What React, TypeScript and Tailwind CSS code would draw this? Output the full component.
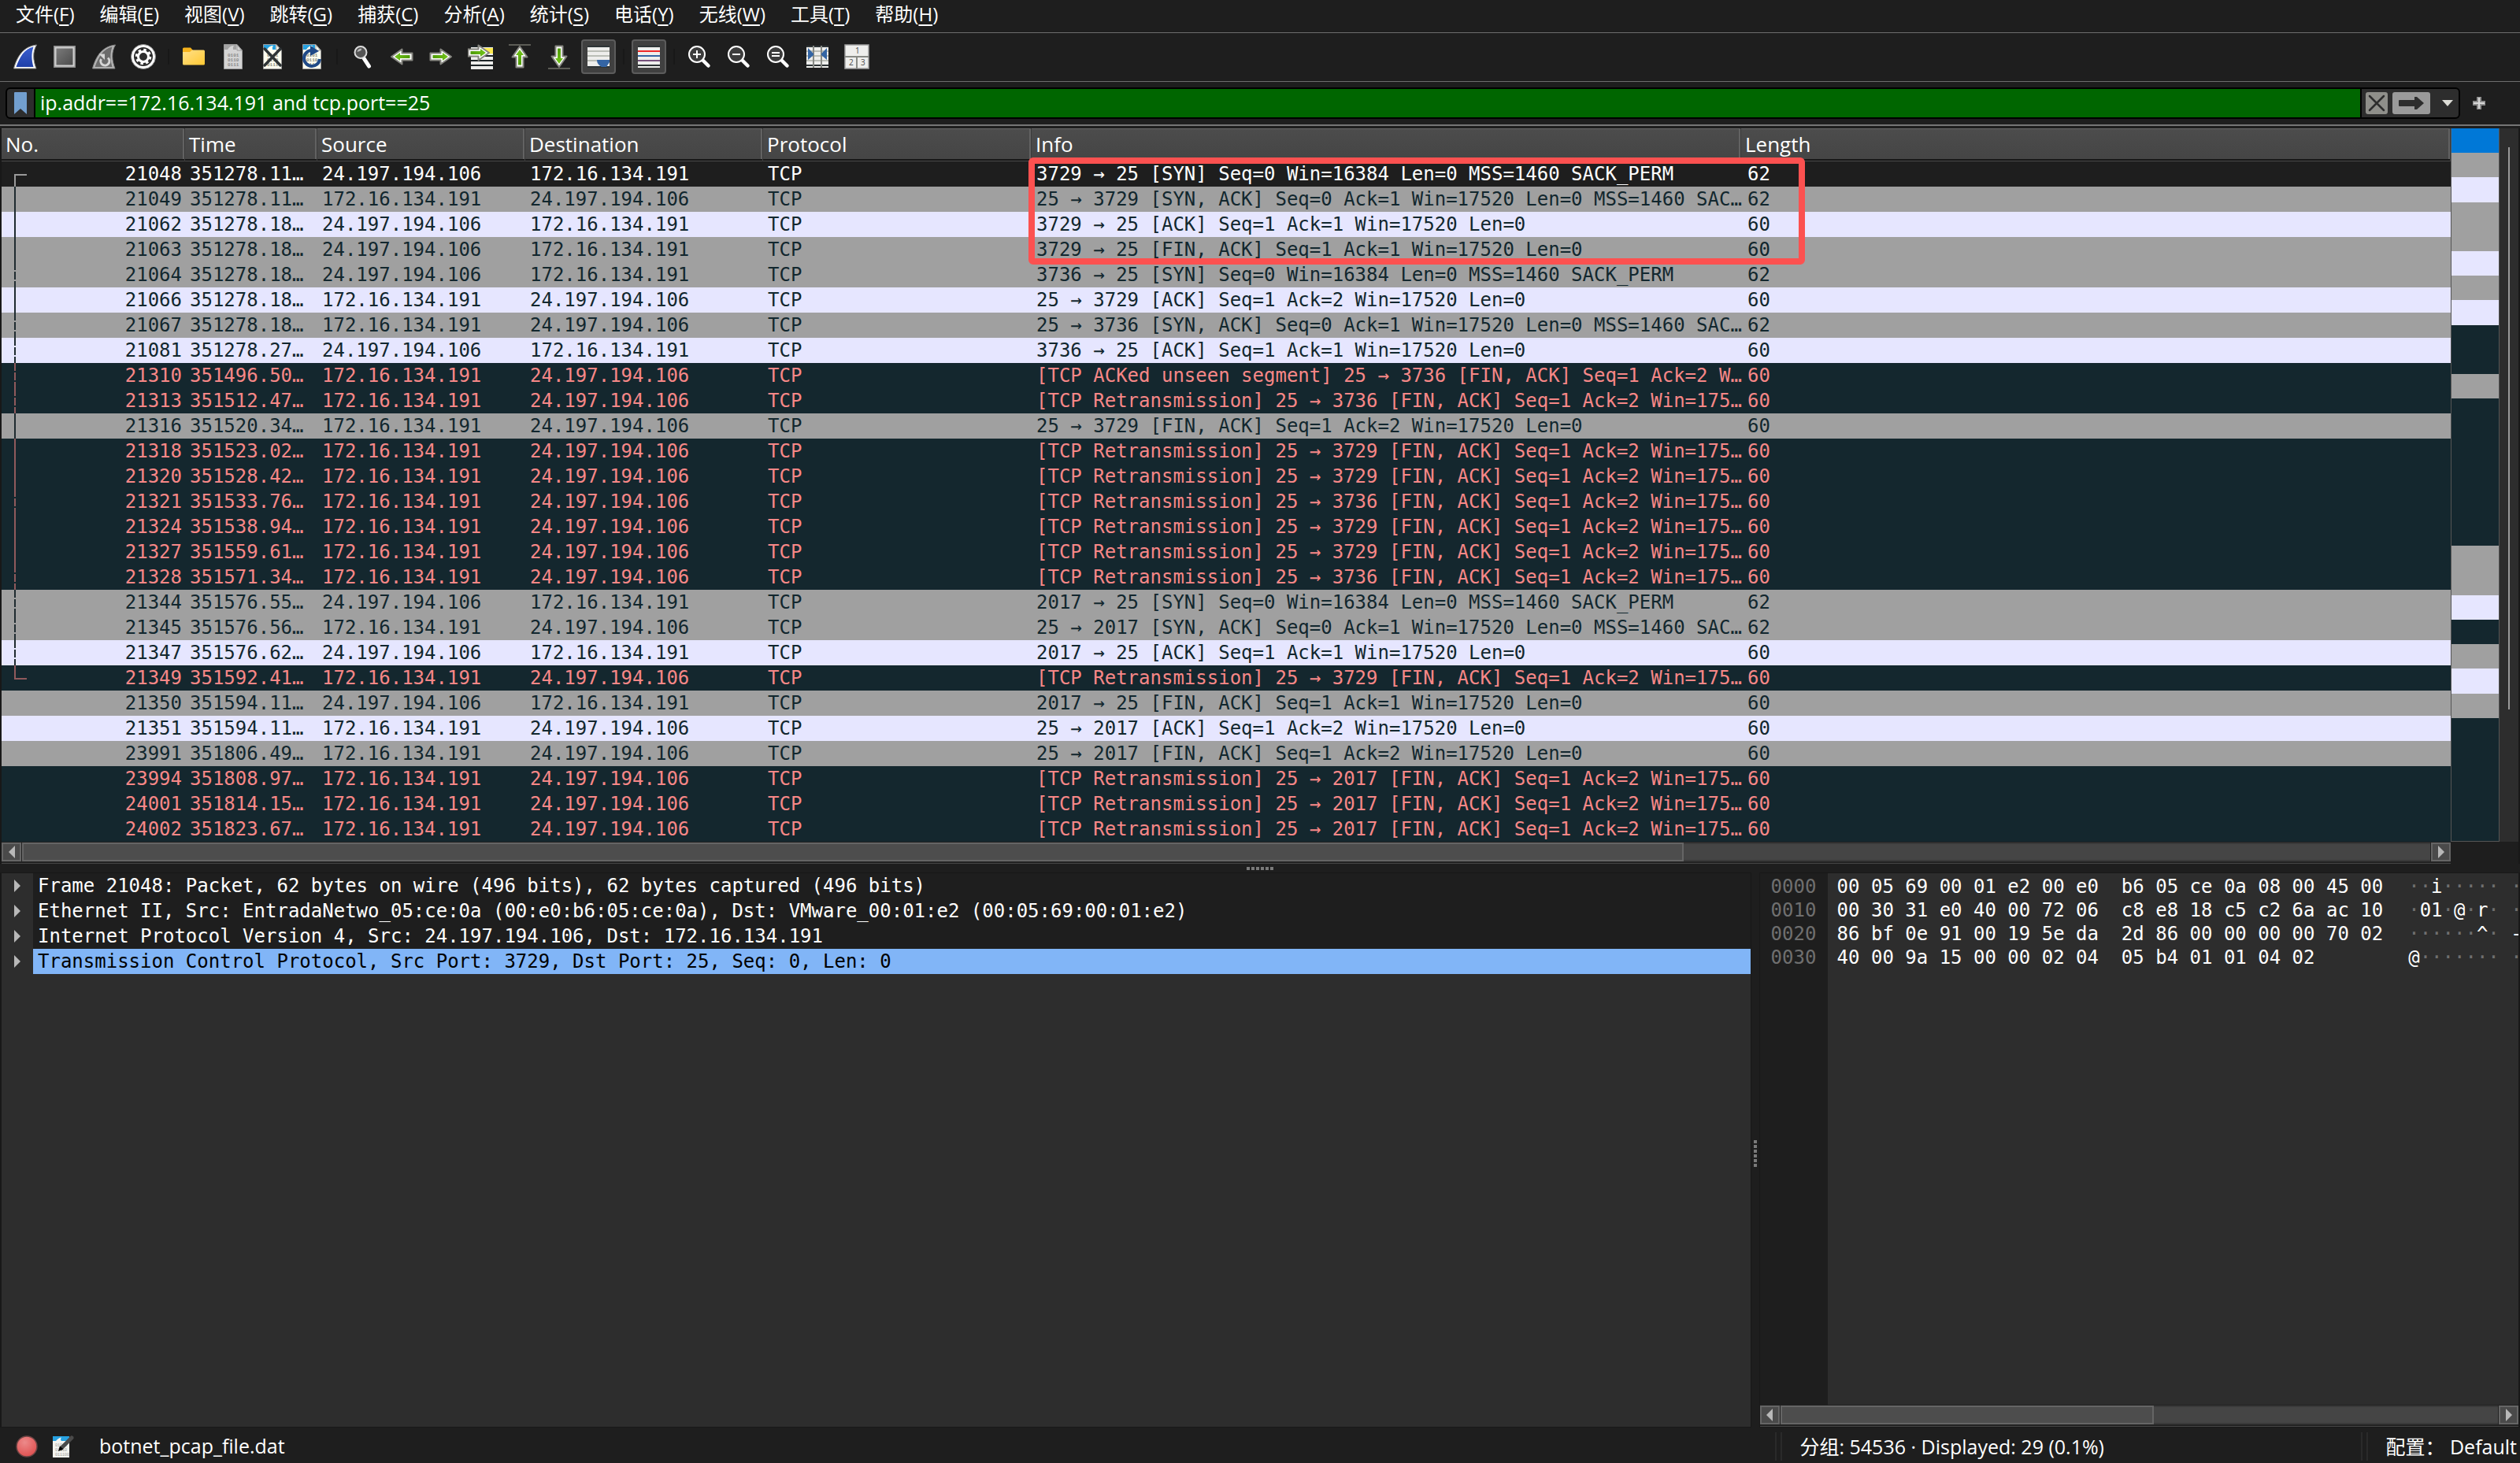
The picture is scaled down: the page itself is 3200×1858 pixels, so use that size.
import type { ReactNode } from "react"
import { clsx } from "clsx"

type Kind = "selected" | "gray" | "tcp" | "bad"
type Link = "start" | "solid" | "dashed" | "end" | null

interface Packet {
  no: string
  time: string
  outbound: boolean
  info: string
  length: number
  kind: Kind
  link: Link
}

const HOST = "172.16.134.191"
const PEER = "24.197.194.106"

const p = (no: string, time: string, outbound: boolean, info: string, length: number, kind: Kind, link: Link): Packet => ({
  no,
  time,
  outbound,
  info,
  length,
  kind,
  link,
})

const packets: Packet[] = [
  p("21048", "351278.11…", false, "3729 → 25 [SYN] Seq=0 Win=16384 Len=0 MSS=1460 SACK_PERM", 62, "selected", "start"),
  p("21049", "351278.11…", true, "25 → 3729 [SYN, ACK] Seq=0 Ack=1 Win=17520 Len=0 MSS=1460 SAC…", 62, "gray", "solid"),
  p("21062", "351278.18…", false, "3729 → 25 [ACK] Seq=1 Ack=1 Win=17520 Len=0", 60, "tcp", "solid"),
  p("21063", "351278.18…", false, "3729 → 25 [FIN, ACK] Seq=1 Ack=1 Win=17520 Len=0", 60, "gray", "solid"),
  p("21064", "351278.18…", false, "3736 → 25 [SYN] Seq=0 Win=16384 Len=0 MSS=1460 SACK_PERM", 62, "gray", "dashed"),
  p("21066", "351278.18…", true, "25 → 3729 [ACK] Seq=1 Ack=2 Win=17520 Len=0", 60, "tcp", "solid"),
  p("21067", "351278.18…", true, "25 → 3736 [SYN, ACK] Seq=0 Ack=1 Win=17520 Len=0 MSS=1460 SAC…", 62, "gray", "dashed"),
  p("21081", "351278.27…", false, "3736 → 25 [ACK] Seq=1 Ack=1 Win=17520 Len=0", 60, "tcp", "dashed"),
  p("21310", "351496.50…", true, "[TCP ACKed unseen segment] 25 → 3736 [FIN, ACK] Seq=1 Ack=2 W…", 60, "bad", "dashed"),
  p("21313", "351512.47…", true, "[TCP Retransmission] 25 → 3736 [FIN, ACK] Seq=1 Ack=2 Win=175…", 60, "bad", "dashed"),
  p("21316", "351520.34…", true, "25 → 3729 [FIN, ACK] Seq=1 Ack=2 Win=17520 Len=0", 60, "gray", "solid"),
  p("21318", "351523.02…", true, "[TCP Retransmission] 25 → 3729 [FIN, ACK] Seq=1 Ack=2 Win=175…", 60, "bad", "solid"),
  p("21320", "351528.42…", true, "[TCP Retransmission] 25 → 3729 [FIN, ACK] Seq=1 Ack=2 Win=175…", 60, "bad", "solid"),
  p("21321", "351533.76…", true, "[TCP Retransmission] 25 → 3736 [FIN, ACK] Seq=1 Ack=2 Win=175…", 60, "bad", "dashed"),
  p("21324", "351538.94…", true, "[TCP Retransmission] 25 → 3729 [FIN, ACK] Seq=1 Ack=2 Win=175…", 60, "bad", "solid"),
  p("21327", "351559.61…", true, "[TCP Retransmission] 25 → 3729 [FIN, ACK] Seq=1 Ack=2 Win=175…", 60, "bad", "solid"),
  p("21328", "351571.34…", true, "[TCP Retransmission] 25 → 3736 [FIN, ACK] Seq=1 Ack=2 Win=175…", 60, "bad", "dashed"),
  p("21344", "351576.55…", false, "2017 → 25 [SYN] Seq=0 Win=16384 Len=0 MSS=1460 SACK_PERM", 62, "gray", "dashed"),
  p("21345", "351576.56…", true, "25 → 2017 [SYN, ACK] Seq=0 Ack=1 Win=17520 Len=0 MSS=1460 SAC…", 62, "gray", "dashed"),
  p("21347", "351576.62…", false, "2017 → 25 [ACK] Seq=1 Ack=1 Win=17520 Len=0", 60, "tcp", "dashed"),
  p("21349", "351592.41…", true, "[TCP Retransmission] 25 → 3729 [FIN, ACK] Seq=1 Ack=2 Win=175…", 60, "bad", "end"),
  p("21350", "351594.11…", false, "2017 → 25 [FIN, ACK] Seq=1 Ack=1 Win=17520 Len=0", 60, "gray", null),
  p("21351", "351594.11…", true, "25 → 2017 [ACK] Seq=1 Ack=2 Win=17520 Len=0", 60, "tcp", null),
  p("23991", "351806.49…", true, "25 → 2017 [FIN, ACK] Seq=1 Ack=2 Win=17520 Len=0", 60, "gray", null),
  p("23994", "351808.97…", true, "[TCP Retransmission] 25 → 2017 [FIN, ACK] Seq=1 Ack=2 Win=175…", 60, "bad", null),
  p("24001", "351814.15…", true, "[TCP Retransmission] 25 → 2017 [FIN, ACK] Seq=1 Ack=2 Win=175…", 60, "bad", null),
  p("24002", "351823.67…", true, "[TCP Retransmission] 25 → 2017 [FIN, ACK] Seq=1 Ack=2 Win=175…", 60, "bad", null),
]

// the overview strip also covers the two packets below the visible rows
const overview: Kind[] = [...packets.map((packet) => packet.kind), "bad", "bad"]

const rowStyle: Record<Kind, string> = {
  selected: "bg-[#1e1e1e] text-white",
  gray: "bg-[#a0a0a0] text-[#12272e]",
  tcp: "bg-[#e6e6ff] text-[#12272e]",
  bad: "bg-[#14272e] text-[#f78787]",
}

const overviewStyle: Record<Kind, string> = {
  selected: "bg-[#0078d7]",
  gray: "bg-[#a0a0a0]",
  tcp: "bg-[#e6e6ff]",
  bad: "bg-[#14272e]",
}

const linkColor: Record<Kind, string> = {
  selected: "#9a9a9a",
  gray: "#1f2b30",
  tcp: "#1f2b30",
  bad: "#8f5a5c",
}

const linkPath = {
  start: "M32 17H17V32",
  solid: "M17 0V32",
  dashed: "M17 0V10M17 12V22M17 24V32",
  end: "M17 0V17H32",
}

const menus = [
  ["文件", "F"],
  ["编辑", "E"],
  ["视图", "V"],
  ["跳转", "G"],
  ["捕获", "C"],
  ["分析", "A"],
  ["统计", "S"],
  ["电话", "Y"],
  ["无线", "W"],
  ["工具", "T"],
  ["帮助", "H"],
]

const columns = [
  { name: "No.", width: "w-[233px]" },
  { name: "Time", width: "w-[168px]" },
  { name: "Source", width: "w-[264px]" },
  { name: "Destination", width: "w-[302px]" },
  { name: "Protocol", width: "w-[341px]" },
  { name: "Info", width: "w-[901px]" },
  { name: "Length", width: "" },
]

const details = [
  "Frame 21048: Packet, 62 bytes on wire (496 bits), 62 bytes captured (496 bits)",
  "Ethernet II, Src: EntradaNetwo_05:ce:0a (00:e0:b6:05:ce:0a), Dst: VMware_00:01:e2 (00:05:69:00:01:e2)",
  "Internet Protocol Version 4, Src: 24.197.194.106, Dst: 172.16.134.191",
  "Transmission Control Protocol, Src Port: 3729, Dst Port: 25, Seq: 0, Len: 0",
]

const hexRows = [
  { offset: "0000", bytes: "00 05 69 00 01 e2 00 e0  b6 05 ce 0a 08 00 45 00", ascii: "··i····· ·" },
  { offset: "0010", bytes: "00 30 31 e0 40 00 72 06  c8 e8 18 c5 c2 6a ac 10", ascii: "·01·@·r· ·" },
  { offset: "0020", bytes: "86 bf 0e 91 00 19 5e da  2d 86 00 00 00 00 70 02", ascii: "······^· -" },
  { offset: "0030", bytes: "40 00 9a 15 00 00 02 04  05 b4 01 01 04 02", ascii: "@······· ·" },
]

const mono = "font-['DejaVu_Sans_Mono','Noto_Sans_CJK_SC',monospace] text-[24px]"

const Svg = ({ children }: { children: ReactNode }) => (
  <svg viewBox="0 0 32 32" className="size-8" fill="none" aria-hidden="true">
    {children}
  </svg>
)

const Bits = ({ fill }: { fill: string }) => (
  <g fill={fill} fontSize="6" fontWeight="bold" fontFamily="Liberation Mono, monospace">
    <text x="9" y="16">0101</text>
    <text x="9" y="22">0110</text>
    <text x="9" y="28">0111</text>
  </g>
)

const Page = ({ paper, band, edge, bits }: { paper: string; band: string; edge: string; bits: string }) => (
  <>
    <path d="M4.500 .5H21L27.500 8V31.500H4.500Z" fill={paper} stroke={edge} />
    <path d="M5 1H20V7H5Z" fill={band} />
    <path d="M9 7Q12 2 17 2Q15 4 16 7Z" fill={paper} />
    <path d="M21 1L27 8H21Z" fill={paper} stroke={edge} />
    <Bits fill={bits} />
  </>
)

const GreenArrow = () => (
  <>
    <path
      d="M2.500 11.500H15.500V6.500L29 16L15.500 25.500V20.500H2.500Z"
      fill="#fff"
      stroke="#85857f"
      strokeWidth="2"
      strokeLinejoin="round"
    />
    <path d="M5.500 14H18V11L25 16L18 21V18H5.500Z" fill="url(#green)" />
  </>
)

const Lens = ({ children }: { children?: ReactNode }) => (
  <>
    <path d="M20 20L27.500 27.500" stroke="#fff" strokeWidth="4.500" strokeLinecap="round" />
    <circle cx="13" cy="13" r="10" fill="#3c3c3c" stroke="#fff" strokeWidth="2" />
    <g stroke="#fff" strokeWidth="2">{children}</g>
  </>
)

const Lines = ({ colors }: { colors: string[] }) => (
  <>
    <path d="M2 2H30V30H2Z" fill="#eeeeec" />
    {colors.map((color, i) => (
      <path key={i} d={`M2 ${3 + i * 6}H30`} stroke={color} strokeWidth="2" />
    ))}
  </>
)

const icons: Record<string, ReactNode> = {
  start: (
    <>
      <path d="M1.500 31C6 15 14 3 30.500 1C25 10 26 21 30 31Z" fill="#fff" stroke="#8a8a8a" />
      <path d="M4.500 29C9 16 15 6 26.500 3.500C23.500 12 24 20 26.500 29Z" fill="url(#blue)" />
    </>
  ),
  stop: (
    <>
      <path d="M2 2H30V30H2Z" fill="#8c8c8c" />
      <path d="M3.500 3.500H28.500V28.500H3.500Z" fill="#cfcfcf" />
      <path d="M5.500 5.500H26.500V26.500H5.500Z" fill="url(#gray)" />
    </>
  ),
  restart: (
    <>
      <path d="M1.500 31C6 15 14 3 30.500 1C25 10 26 21 30 31Z" fill="#b5b5b5" stroke="#858585" />
      <path d="M4.500 29C9 16 15 6 26.500 3.500C23.500 12 24 20 26.500 29Z" fill="#6b6b6b" />
      <path d="M21 17.500A5.500 5.500 0 1 1 12.500 19" stroke="#d6d6d6" strokeWidth="3" />
      <path d="M9.500 12.500H17V20Z" fill="#d6d6d6" />
    </>
  ),
  options: (
    <>
      <circle cx="16" cy="16" r="15.500" fill="#fff" stroke="#8a8a8a" />
      <circle cx="16" cy="16" r="12" fill="#2d2d2d" />
      <circle cx="16" cy="16" r="8.500" stroke="#fff" strokeWidth="3.500" strokeDasharray="3.340 3.340" />
      <circle cx="16" cy="16" r="6.500" stroke="#fff" strokeWidth="3" />
    </>
  ),
  open: (
    <>
      <path d="M2 6Q2 4.500 3.500 4.500H12L15 8V12H2Z" fill="#f6b31c" />
      <path d="M2 10H11L14 7.500H28.500Q30 7.500 30 9V25Q30 26.500 28.500 26.500H3.500Q2 26.500 2 25Z" fill="url(#folder)" />
    </>
  ),
  save: <Page paper="#d4d4d4" band="#a3a3a3" edge="#9a9a9a" bits="#8a8a8a" />,
  close: (
    <>
      <Page paper="#fffff0" band="#27a1e0" edge="#9a9a9a" bits="#8b8b7c" />
      <path d="M6 6L26 27M26 6L6 27" stroke="#2e3436" strokeWidth="3.500" strokeLinecap="round" />
    </>
  ),
  reload: (
    <>
      <Page paper="#fffff0" band="#27a1e0" edge="#9a9a9a" bits="#8b8b7c" />
      <path d="M15 8A10 10 0 1 0 26 19" stroke="#204a87" strokeWidth="4" />
      <path d="M14 2L25 9L14 15Z" fill="#204a87" />
    </>
  ),
  find: (
    <>
      <path d="M18 18L24.500 28" stroke="#fff" strokeWidth="5" strokeLinecap="round" />
      <circle cx="14" cy="10.500" r="7.500" fill="#555" stroke="#dcdcdc" strokeWidth="2" />
      <path d="M9.500 10Q10 6 14.500 5.500Q17 8 9.500 10Z" fill="#b8b8b8" />
    </>
  ),
  back: (
    <g transform="rotate(180 16 16)">
      <GreenArrow />
    </g>
  ),
  forward: <GreenArrow />,
  goto: (
    <>
      <path d="M4 3H32V32H4Z" fill="#eeeeec" />
      <path d="M20 5H32V12H20Z" fill="#fce94f" />
      <path d="M4 3H32M4 15H32M4 21H32M4 27H32" stroke="#1e2427" strokeWidth="2" />
      <g transform="translate(-2 -5)">
        <GreenArrow />
      </g>
    </>
  ),
  first: (
    <>
      <path d="M2 1H30" stroke="#5c5c56" strokeWidth="2" />
      <g transform="rotate(-90 16 16)">
        <GreenArrow />
      </g>
    </>
  ),
  last: (
    <>
      <g transform="rotate(90 16 16)">
        <GreenArrow />
      </g>
      <path d="M2 31H30" stroke="#5c5c56" strokeWidth="2" />
    </>
  ),
  autoscroll: (
    <>
      <Lines colors={["#2e3436", "#babdb6", "#babdb6", "#babdb6"]} />
      <path d="M2 29H30" stroke="#2e3436" strokeWidth="2" />
      <path d="M14 20H30V23L26 29H20Q14 26 14 20Z" fill="#3465a4" />
    </>
  ),
  colorize: <Lines colors={["#2e3436", "#ef2929", "#3465a4", "#75507b", "#2e3436"]} />,
  zoomIn: (
    <Lens>
      <path d="M8 13H18M13 8V18" />
    </Lens>
  ),
  zoomOut: (
    <Lens>
      <path d="M8 13H18" />
    </Lens>
  ),
  zoomReset: (
    <Lens>
      <path d="M8 11H18M8 15H18" />
    </Lens>
  ),
  resize: (
    <>
      <Lines colors={["#2e3436", "#babdb6", "#babdb6", "#babdb6", "#2e3436"]} />
      <path d="M11 2V30M21 2V30" stroke="#888a85" strokeWidth="2" />
      <path d="M4 5L11 12V14L4 20ZM28 5L21 12V14L28 20Z" fill="#3465a4" />
    </>
  ),
  layout: (
    <>
      <path d="M1 1H31V31H1Z" fill="#eeeeec" stroke="#a0a0a0" strokeWidth="1.500" />
      <path d="M1 16H31M16 16V31" stroke="#888a85" strokeWidth="2" />
      <g fill="#555" fontSize="10" fontFamily="Noto Sans, sans-serif">
        <text x="14" y="12">1</text>
        <text x="6" y="27">2</text>
        <text x="21" y="27">3</text>
      </g>
    </>
  ),
}

const toolGroups = [
  ["start", "stop", "restart", "options"],
  ["open", "save", "close", "reload"],
  ["find", "back", "forward", "goto", "first", "last", "autoscroll"],
  ["colorize"],
  ["zoomIn", "zoomOut", "zoomReset", "resize", "layout"],
]

const pressed = ["autoscroll", "colorize"]

const Gradients = () => (
  <svg className="absolute size-0" aria-hidden="true">
    <defs>
      <linearGradient id="green" x1="0" y1="0" x2="1" y2="0">
        <stop offset="0" stopColor="#4e9a06" />
        <stop offset="1" stopColor="#73c41c" />
      </linearGradient>
      <linearGradient id="blue" x1="0" y1="0" x2="0" y2="1">
        <stop offset="0" stopColor="#3a5fd0" />
        <stop offset="1" stopColor="#1f3fa8" />
      </linearGradient>
      <linearGradient id="gray" x1="0" y1="0" x2="1" y2="1">
        <stop offset="0" stopColor="#7a7a7a" />
        <stop offset="1" stopColor="#4c4c4c" />
      </linearGradient>
      <linearGradient id="folder" x1="0" y1="0" x2="1" y2="1">
        <stop offset="0" stopColor="#ffe08a" />
        <stop offset="1" stopColor="#ffc933" />
      </linearGradient>
      <radialGradient id="red" cx="0.4" cy="0.3" r="0.7">
        <stop offset="0" stopColor="#ec8a8a" />
        <stop offset="1" stopColor="#e05252" />
      </radialGradient>
    </defs>
  </svg>
)

const MenuBar = () => (
  <nav className="flex h-[42px] items-center gap-8 border-b border-[#6d6d6d] pb-[5px] pl-5 text-[24px]">
    {menus.map(([label, key]) => (
      <button key={key} className="leading-8 whitespace-nowrap">
        {label}(<span className="underline decoration-2 underline-offset-4">{key}</span>)
      </button>
    ))}
  </nav>
)

const ToolBar = () => (
  <div className="flex h-[62px] items-center gap-[6px] border-b border-[#6d6d6d] pb-[2px] pl-[10px]">
    {toolGroups.map((group, i) => (
      <div key={i} className="flex items-center gap-[6px]">
        {i > 0 && <div className="mx-[3px] h-5 w-[2px] bg-[#181818]" />}
        {group.map((name) => (
          <button
            key={name}
            aria-label={name}
            className={clsx(
              "flex size-11 items-center justify-center rounded",
              pressed.includes(name) && "border-2 border-[#5c5c5c] bg-[#404040]"
            )}
          >
            <Svg>{icons[name]}</Svg>
          </button>
        ))}
      </div>
    ))}
  </div>
)

const FilterBar = () => (
  <div className="flex h-14 items-center border-b-2 border-[#757575] pr-11 pl-[7px]">
    <div className="flex h-10 flex-1 overflow-hidden rounded-md border-2 border-black bg-[#2d2d2d]">
      <button aria-label="bookmark" className="flex w-9 items-center justify-center border-r-2 border-black">
        <svg viewBox="0 0 16 28" className="h-7 w-4" aria-hidden="true">
          <path d="M0 1Q0 0 1 0H15Q16 0 16 1V28L8 21L0 28Z" fill="#729fcf" />
        </svg>
      </button>
      <input
        aria-label="filter"
        defaultValue="ip.addr==172.16.134.191 and tcp.port==25"
        className="min-w-0 flex-1 bg-[#006600] px-[6px] text-[25px] text-white outline-none"
      />
      <div className="flex items-center gap-[6px] border-l-2 border-black pr-[7px] pl-[5px]">
        <button aria-label="clear">
          <svg viewBox="0 0 28 28" className="size-7" aria-hidden="true">
            <rect width="28" height="28" rx="3" fill="#8f8f8a" />
            <path d="M5 5L23 23M23 5L5 23" stroke="#2d2d2d" strokeWidth="2.500" strokeLinecap="round" />
          </svg>
        </button>
        <button aria-label="apply">
          <svg viewBox="0 0 48 28" className="h-7 w-12" aria-hidden="true">
            <rect width="48" height="28" rx="3" fill="#9a9a9a" />
            <path d="M9 10H28V6H31L40 14L31 22H28V18H9Q8 18 8 17V11Q8 10 9 10Z" fill="#2d2d2d" />
          </svg>
        </button>
        <button aria-label="history" className="flex w-[23px] justify-end">
          <svg viewBox="0 0 14 8" className="h-2 w-[14px]" aria-hidden="true">
            <path d="M0 0H14L7 8Z" fill="#dcdcd6" />
          </svg>
        </button>
      </div>
    </div>
    <button aria-label="add" className="ml-4">
      <svg viewBox="0 0 16 16" className="size-4" aria-hidden="true">
        <path d="M5 0H11V5H16V11H11V16H5V11H0V5H5Z" fill="#8c8c8c" />
        <path d="M8 1V15M1 8H15" stroke="#d8d8d8" strokeWidth="2" />
      </svg>
    </button>
  </div>
)

const Caret = ({ left = false }: { left?: boolean }) => (
  <svg viewBox="0 0 8 16" className={clsx("h-4 w-2", left && "rotate-180")} aria-hidden="true">
    <path d="M0 0L8 8L0 16Z" fill="#b8b8b8" />
  </svg>
)

const ScrollBar = ({ thumb }: { thumb: string }) => (
  <div className="flex h-7 border-b border-[#454545] bg-[#222] pt-[1px] pb-[2px]">
    <button aria-label="scroll left" className="flex w-[25px] items-center justify-center border-2 border-[#656565] bg-[#4a4a4a]">
      <Caret left />
    </button>
    <div className="mx-[1px] flex-1 border-y-2 border-[#3a3a3a] bg-[#454545]">
      <div className={clsx("-my-[2px] h-6 border-2 border-[#656565] bg-[#4d4d4d]", thumb)} />
    </div>
    <button aria-label="scroll right" className="flex w-[25px] items-center justify-center border-2 border-[#656565] bg-[#4a4a4a]">
      <Caret />
    </button>
  </div>
)

const PacketTable = () => (
  <table className="w-full table-fixed border-separate border-spacing-0 bg-[#1e1e1e]">
    <thead>
      <tr>
        {columns.map((column) => (
          <th
            key={column.name}
            className={clsx(
              "border-r border-b border-r-[#3a3a3a] border-b-[#4a4a4a] bg-[#171717] p-0 pb-[2px] text-left text-[26px] font-normal",
              column.width
            )}
          >
            <div className="h-[39px] border-t border-r-2 border-t-[#666] border-r-[#626262] bg-linear-to-b from-[#4c4c4c] to-[#454545] pl-[5px] leading-[39px]">
              {column.name}
            </div>
          </th>
        ))}
      </tr>
    </thead>
    <tbody className={mono}>
      {packets.map((packet) => (
        <tr key={packet.no} className={clsx("leading-8 whitespace-pre", rowStyle[packet.kind])}>
          <td className="p-0">
            <div className="flex h-8 justify-between pr-1">
              <svg viewBox="0 0 34 32" className="h-8 w-[34px]" fill="none" aria-hidden="true">
                {packet.link && <path d={linkPath[packet.link]} stroke={linkColor[packet.kind]} strokeWidth="2" />}
              </svg>
              {packet.no}
            </div>
          </td>
          <td className="p-0 pl-[6px]">{packet.time}</td>
          <td className="p-0 pl-[6px]">{packet.outbound ? HOST : PEER}</td>
          <td className="p-0 pl-[6px]">{packet.outbound ? PEER : HOST}</td>
          <td className="p-0 pl-[6px]">TCP</td>
          <td className="p-0 pl-[6px]">{packet.info}</td>
          <td className="p-0 pl-2">{packet.length}</td>
        </tr>
      ))}
    </tbody>
  </table>
)

const PacketList = () => (
  <section className="relative mt-[3px] flex border-x-2 border-[#181818]">
    <div className="min-w-0 flex-1">
      <PacketTable />
      <ScrollBar thumb="w-[69%]" />
    </div>
    <div className="mb-7 flex w-[62px] flex-col border-x border-b border-[#555]">
      {overview.map((kind, i) => (
        <div key={i} className={clsx("flex-1", overviewStyle[kind])} />
      ))}
    </div>
    <div className="mb-7 flex w-6 justify-center bg-[#2d2d2d] pt-6">
      <div className="h-[714px] w-[2px] bg-[#9a9a9a]" />
    </div>
    {/* highlight over the first handshake */}
    <div className="absolute top-[37px] left-[1304px] h-[136px] w-[986px] rounded-md border-8 border-[#fc5150]" />
  </section>
)

const Grip = ({ vertical = false }: { vertical?: boolean }) => (
  <div className={clsx("flex items-center justify-center gap-[2px]", vertical ? "flex-col pt-2" : "h-[11px]")}>
    {[0, 1, 2, 3, 4, 5].map((i) => (
      <div key={i} className="size-1 bg-[#7a7a7a]" />
    ))}
  </div>
)

const DetailPane = () => (
  <section className={clsx("border border-l-2 border-[#181818] bg-[#2d2d2d]", mono)}>
    {details.map((line, i) => (
      <button key={line} className="flex w-full text-left leading-8">
        <span className="flex h-8 w-10 items-center justify-center">
          <Caret />
        </span>
        <span
          className={clsx(
            "h-8 min-w-0 flex-1 overflow-hidden pl-[6px] whitespace-pre",
            i === details.length - 1 ? "bg-[#81b5f7] text-black" : "bg-[#1e1e1e]"
          )}
        >
          {line}
        </span>
      </button>
    ))}
  </section>
)

const HexPane = () => (
  <section className={clsx("flex min-w-0 flex-col overflow-hidden border border-r-2 border-[#181818] bg-[#2d2d2d]", mono)}>
    <div className="flex min-h-0 flex-1 leading-[30px] whitespace-pre">
      <div className="w-[86px] shrink-0 bg-[#1e1e1e] pt-[2px] pl-[14px] text-[#6f6f6f]">
        {hexRows.map((row) => (
          <div key={row.offset}>{row.offset}</div>
        ))}
      </div>
      <div className="pt-[2px] pl-3">
        {hexRows.map((row) => (
          <div key={row.offset}>{row.bytes}</div>
        ))}
      </div>
      <div className="min-w-0 flex-1 overflow-hidden pt-[2px] pl-8">
        {hexRows.map((row) => (
          <div key={row.offset}>
            {row.ascii.split("").map((char, i) => (
              <span key={i} className={clsx(char === "·" && "text-[#6f6f6f]")}>
                {char}
              </span>
            ))}
          </div>
        ))}
      </div>
    </div>
    <ScrollBar thumb="w-[52%]" />
  </section>
)

const StatusBar = () => (
  <footer className="flex h-[45px] items-center pt-[2px] text-[25px] whitespace-nowrap">
    <div className="flex flex-1 items-center pl-5">
      <button aria-label="expert info">
        <svg viewBox="0 0 28 28" className="size-7" aria-hidden="true">
          <circle cx="14" cy="14" r="13" fill="url(#red)" stroke="#6b4444" strokeWidth="1.500" />
        </svg>
      </button>
      <button aria-label="capture comment" className="ml-[18px]">
        <svg viewBox="0 0 28 28" className="size-7" fill="none" aria-hidden="true">
          <path d="M1 1H22V28H1Z" fill="#f4f4f0" />
          <path d="M1 1H22V7H1Z" fill="#27a1e0" />
          <path d="M5 7Q8 3 12 2.500Q10 5 12 7Z" fill="#f4f4f0" />
          <g fill="#a0a09a" fontSize="5" fontFamily="Liberation Mono, monospace">
            <text x="4" y="14">01010</text>
            <text x="4" y="20">01110</text>
            <text x="4" y="26">011100</text>
          </g>
          <path d="M12 16L25 3" stroke="#4a4a4a" strokeWidth="5" strokeLinecap="round" />
          <path d="M8 20L10 13.500L14.500 17.500Z" fill="#000" />
        </svg>
      </button>
      <span className="ml-8">botnet_pcap_file.dat</span>
    </div>
    <div className="flex h-9 w-[744px] items-center border-l-2 border-[#2a2a2a]">
      <div className="ml-[5px] h-9 border-l-2 border-[#2a2a2a] pl-[22px] leading-9">分组: 54536 · Displayed: 29 (0.1%)</div>
    </div>
    <div className="flex h-9 items-center border-l-2 border-[#2a2a2a] pr-1">
      <div className="ml-[5px] h-9 border-l-2 border-[#2a2a2a] pl-[22px] leading-9">配置： Default</div>
    </div>
  </footer>
)

export default function App() {
  return (
    <div className="flex min-h-screen flex-col bg-[#1e1e1e] font-['Open_Sans','Noto_Sans_CJK_SC',sans-serif] text-white">
      <Gradients />
      <MenuBar />
      <ToolBar />
      <FilterBar />
      <PacketList />
      <Grip />
      <main className="grid flex-1 grid-cols-[minmax(0,1fr)_10px_30.2%]">
        <DetailPane />
        <Grip vertical />
        <HexPane />
      </main>
      <StatusBar />
    </div>
  )
}
